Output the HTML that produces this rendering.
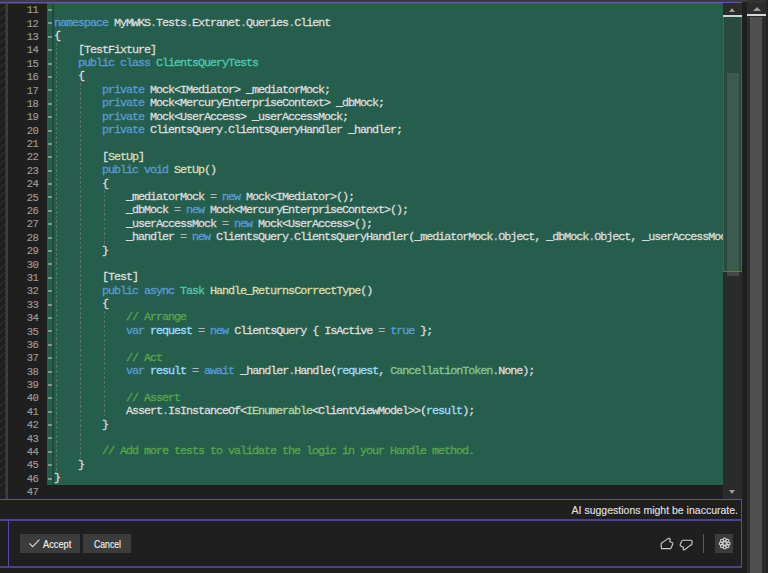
<!DOCTYPE html>
<html><head><meta charset="utf-8"><style>
html,body{margin:0;padding:0;}
body{width:768px;height:573px;overflow:hidden;background:#1f1f1f;position:relative;font-family:"Liberation Mono",monospace;}
.abs{position:absolute;}
#topbar{position:absolute;left:0;top:0;width:748px;height:2px;background:#3c3c3c;}
#topbar2{position:absolute;left:748px;top:0;width:20px;height:3px;background:#333;}
#purple{position:absolute;left:0;top:2px;width:742px;height:1px;background:#6655b0;}
#purple2{position:absolute;left:0;top:3px;width:742px;height:1px;background:rgba(102,85,176,0.45);}
#hatch{position:absolute;left:0;top:4px;width:6px;height:495px;
 background:repeating-linear-gradient(135deg,#1f1f1f 0px,#1f1f1f 4.5px,#2d2d2d 4.5px,#2d2d2d 5.7px);}
#gbar{position:absolute;left:5px;top:4px;width:3px;height:495px;background:linear-gradient(90deg,#303031 0,#303031 1px,#3e3e40 1px);}
#green{position:absolute;left:47px;top:3px;width:677px;height:482px;background:#265e4d;}
#gstripe{position:absolute;left:52px;top:3px;width:2px;height:482px;background:#204a3c;}
.fd{position:absolute;left:48px;width:4px;height:2px;background:#7c9b8d;}
.ig{position:absolute;width:1px;background:repeating-linear-gradient(180deg,#587468 0px,#587468 2.7px,transparent 2.7px,transparent 4.67px);}
.nm{position:absolute;left:0;width:38.4px;margin-top:1.2px;text-align:right;height:13.39px;line-height:13.39px;font-size:11.75px;letter-spacing:-0.6px;transform:scaleX(0.9);transform-origin:right center;color:#9d9d9d;white-space:pre;-webkit-text-stroke:0.15px currentColor;}
.ln{position:absolute;left:54px;margin-top:0.5px;-webkit-text-stroke:0.3px currentColor;height:13.39px;line-height:13.39px;font-size:11.75px;letter-spacing:-1.05px;color:#dcdcdc;white-space:pre;}
#code{position:absolute;left:0;top:0;width:723px;height:499px;overflow:hidden;}
.k{color:#569cd6}.t{color:#4ec9b0}.s{color:#86c691}.i{color:#b8d7a3}.m{color:#dcdcaa}.p{color:#9cdcfe}.c{color:#57a64a}.o{color:#b4b4b4}
/* editor scrollbar */
#vs{position:absolute;left:723px;top:3px;width:19px;height:496px;background:#2b2b2b;}
#vsTrack{position:absolute;left:723px;top:17px;width:17px;height:254px;border-left:1px solid #4f5e3b;border-right:1px solid #4f5e3b;border-bottom:1px solid #66784a;background:transparent;}
#vsTrackBg{position:absolute;left:724px;top:17px;width:17px;height:254px;background:#2b4a3f;}
#vsThumbX{position:absolute;left:727px;top:272px;width:11.5px;height:4px;background:#474747;}
#vsThumb{position:absolute;left:727px;top:73px;width:11.5px;height:198px;background:#3d5a51;}
#vsMark{position:absolute;left:723px;top:15px;width:19px;height:2px;background:#d2d4c8;}
.tri-up{position:absolute;width:0;height:0;border-left:3.5px solid transparent;border-right:3.5px solid transparent;border-bottom:4.5px solid #9a9a9a;}
.tri-dn{position:absolute;width:0;height:0;border-left:3.5px solid transparent;border-right:3.5px solid transparent;border-top:4.5px solid #9a9a9a;}
/* outer scrollbar */
#os{position:absolute;left:747px;top:3px;width:19px;height:570px;background:#2c2c2c;}
#osEdge{position:absolute;left:766px;top:0;width:2px;height:573px;background:#252525;}
#osThumb{position:absolute;left:750px;top:16.6px;width:12.2px;height:556px;background:#4f4f4f;}
#osMark{position:absolute;left:747px;top:14px;width:19px;height:2px;background:#d6d6d6;}
/* bottom panel */
.pl{position:absolute;background:#6655b8;}
#aitext{position:absolute;left:538px;top:500px;width:200px;height:20px;line-height:20px;text-align:right;font-family:"Liberation Sans",sans-serif;font-size:11.3px;transform:scaleX(0.93);transform-origin:right center;color:#dedede;white-space:nowrap;-webkit-text-stroke:0.2px currentColor;}
.btn{position:absolute;top:534px;height:19px;background:#3c3c3c;font-family:"Liberation Sans",sans-serif;font-size:11px;color:#f0f0f0;line-height:19px;}
#gearbox{position:absolute;left:715px;top:534px;width:18px;height:19px;background:#3c3c3c;}
#sep{position:absolute;left:703px;top:534px;width:1px;height:19px;background:#5a5a5a;}

.bt{position:absolute;top:1px;font-size:11px;-webkit-text-stroke:0.15px currentColor;transform:scaleX(0.84);transform-origin:left center;white-space:nowrap;}

</style></head><body>
<div id="topbar"></div><div id="topbar2"></div>
<div id="hatch"></div><div id="gbar"></div>
<div id="green"></div>
<div id="gstripe"></div>
<div class="fd" style="top:9.00px"></div>
<div class="fd" style="top:22.39px"></div>
<div class="fd" style="top:35.78px"></div>
<div class="fd" style="top:49.17px"></div>
<div class="fd" style="top:62.56px"></div>
<div class="fd" style="top:75.95px"></div>
<div class="fd" style="top:89.34px"></div>
<div class="fd" style="top:102.73px"></div>
<div class="fd" style="top:116.12px"></div>
<div class="fd" style="top:129.51px"></div>
<div class="fd" style="top:142.90px"></div>
<div class="fd" style="top:156.29px"></div>
<div class="fd" style="top:169.68px"></div>
<div class="fd" style="top:183.07px"></div>
<div class="fd" style="top:196.46px"></div>
<div class="fd" style="top:209.85px"></div>
<div class="fd" style="top:223.24px"></div>
<div class="fd" style="top:236.63px"></div>
<div class="fd" style="top:250.02px"></div>
<div class="fd" style="top:263.41px"></div>
<div class="fd" style="top:276.80px"></div>
<div class="fd" style="top:290.19px"></div>
<div class="fd" style="top:303.58px"></div>
<div class="fd" style="top:316.97px"></div>
<div class="fd" style="top:330.36px"></div>
<div class="fd" style="top:343.75px"></div>
<div class="fd" style="top:357.14px"></div>
<div class="fd" style="top:370.53px"></div>
<div class="fd" style="top:383.92px"></div>
<div class="fd" style="top:397.31px"></div>
<div class="fd" style="top:410.70px"></div>
<div class="fd" style="top:424.09px"></div>
<div class="fd" style="top:437.48px"></div>
<div class="fd" style="top:450.87px"></div>
<div class="fd" style="top:464.26px"></div>
<div class="fd" style="top:477.65px"></div>
<div class="ig" style="left:56px;top:43.17px;height:428.48px"></div>
<div class="ig" style="left:80px;top:83.34px;height:374.92px"></div>
<div class="ig" style="left:104px;top:190.46px;height:53.56px"></div>
<div class="ig" style="left:104px;top:310.97px;height:107.12px"></div>
<div id="code">
<div class="nm" style="top:3.00px">11</div>
<div class="nm" style="top:16.39px">12</div>
<div class="nm" style="top:29.78px">13</div>
<div class="nm" style="top:43.17px">14</div>
<div class="nm" style="top:56.56px">15</div>
<div class="nm" style="top:69.95px">16</div>
<div class="nm" style="top:83.34px">17</div>
<div class="nm" style="top:96.73px">18</div>
<div class="nm" style="top:110.12px">19</div>
<div class="nm" style="top:123.51px">20</div>
<div class="nm" style="top:136.90px">21</div>
<div class="nm" style="top:150.29px">22</div>
<div class="nm" style="top:163.68px">23</div>
<div class="nm" style="top:177.07px">24</div>
<div class="nm" style="top:190.46px">25</div>
<div class="nm" style="top:203.85px">26</div>
<div class="nm" style="top:217.24px">27</div>
<div class="nm" style="top:230.63px">28</div>
<div class="nm" style="top:244.02px">29</div>
<div class="nm" style="top:257.41px">30</div>
<div class="nm" style="top:270.80px">31</div>
<div class="nm" style="top:284.19px">32</div>
<div class="nm" style="top:297.58px">33</div>
<div class="nm" style="top:310.97px">34</div>
<div class="nm" style="top:324.36px">35</div>
<div class="nm" style="top:337.75px">36</div>
<div class="nm" style="top:351.14px">37</div>
<div class="nm" style="top:364.53px">38</div>
<div class="nm" style="top:377.92px">39</div>
<div class="nm" style="top:391.31px">40</div>
<div class="nm" style="top:404.70px">41</div>
<div class="nm" style="top:418.09px">42</div>
<div class="nm" style="top:431.48px">43</div>
<div class="nm" style="top:444.87px">44</div>
<div class="nm" style="top:458.26px">45</div>
<div class="nm" style="top:471.65px">46</div>
<div class="nm" style="top:485.04px">47</div>
<div class="ln" style="top:3.00px"></div>
<div class="ln" style="top:16.39px"><span class="k">namespace</span> MyMWKS<span class="o">.</span>Tests<span class="o">.</span>Extranet<span class="o">.</span>Queries<span class="o">.</span>Client</div>
<div class="ln" style="top:29.78px">{</div>
<div class="ln" style="top:43.17px">    [TestFixture]</div>
<div class="ln" style="top:56.56px">    <span class="k">public</span> <span class="k">class</span> <span class="t">ClientsQueryTests</span></div>
<div class="ln" style="top:69.95px">    {</div>
<div class="ln" style="top:83.34px">        <span class="k">private</span> Mock&lt;IMediator&gt; _mediatorMock;</div>
<div class="ln" style="top:96.73px">        <span class="k">private</span> Mock&lt;MercuryEnterpriseContext&gt; _dbMock;</div>
<div class="ln" style="top:110.12px">        <span class="k">private</span> Mock&lt;UserAccess&gt; _userAccessMock;</div>
<div class="ln" style="top:123.51px">        <span class="k">private</span> ClientsQuery<span class="o">.</span>ClientsQueryHandler _handler;</div>
<div class="ln" style="top:136.90px"></div>
<div class="ln" style="top:150.29px">        [<span class="m">SetUp</span>]</div>
<div class="ln" style="top:163.68px">        <span class="k">public</span> <span class="k">void</span> <span class="m">SetUp</span>()</div>
<div class="ln" style="top:177.07px">        {</div>
<div class="ln" style="top:190.46px">            _mediatorMock <span class="o">=</span> <span class="k">new</span> Mock&lt;IMediator&gt;();</div>
<div class="ln" style="top:203.85px">            _dbMock <span class="o">=</span> <span class="k">new</span> Mock&lt;MercuryEnterpriseContext&gt;();</div>
<div class="ln" style="top:217.24px">            _userAccessMock <span class="o">=</span> <span class="k">new</span> Mock&lt;UserAccess&gt;();</div>
<div class="ln" style="top:230.63px">            _handler <span class="o">=</span> <span class="k">new</span> ClientsQuery<span class="o">.</span>ClientsQueryHandler(_mediatorMock<span class="o">.</span>Object, _dbMock<span class="o">.</span>Object, _userAccessMock<span class="o">.</span>Object);</div>
<div class="ln" style="top:244.02px">        }</div>
<div class="ln" style="top:257.41px"></div>
<div class="ln" style="top:270.80px">        [Test]</div>
<div class="ln" style="top:284.19px">        <span class="k">public</span> <span class="k">async</span> <span class="t">Task</span> <span class="m">Handle_ReturnsCorrectType</span>()</div>
<div class="ln" style="top:297.58px">        {</div>
<div class="ln" style="top:310.97px">            <span class="c">// Arrange</span></div>
<div class="ln" style="top:324.36px">            <span class="k">var</span> <span class="p">request</span> <span class="o">=</span> <span class="k">new</span> ClientsQuery { IsActive <span class="o">=</span> <span class="k">true</span> };</div>
<div class="ln" style="top:337.75px"></div>
<div class="ln" style="top:351.14px">            <span class="c">// Act</span></div>
<div class="ln" style="top:364.53px">            <span class="k">var</span> <span class="p">result</span> <span class="o">=</span> <span class="k">await</span> _handler<span class="o">.</span>Handle(<span class="p">request</span>, <span class="s">CancellationToken</span><span class="o">.</span>None);</div>
<div class="ln" style="top:377.92px"></div>
<div class="ln" style="top:391.31px">            <span class="c">// Assert</span></div>
<div class="ln" style="top:404.70px">            Assert<span class="o">.</span>IsInstanceOf&lt;<span class="i">IEnumerable</span>&lt;ClientViewModel&gt;&gt;(<span class="p">result</span>);</div>
<div class="ln" style="top:418.09px">        }</div>
<div class="ln" style="top:431.48px"></div>
<div class="ln" style="top:444.87px">        <span class="c">// Add more tests to validate the logic in your Handle method.</span></div>
<div class="ln" style="top:458.26px">    }</div>
<div class="ln" style="top:471.65px">}</div>
<div class="ln" style="top:485.04px"></div>
</div>
<div id="purple"></div><div id="purple2"></div>
<div id="vs"></div>
<div id="vsTrackBg"></div>
<div id="vsThumb"></div>
<div id="vsThumbX"></div>
<div id="vsTrack"></div>
<div id="vsMark"></div>
<div class="tri-up" style="left:729px;top:8px"></div>
<div class="tri-dn" style="left:729px;top:490px"></div>
<div id="os"></div>
<div id="osEdge"></div>
<div id="osThumb"></div>
<div id="osMark"></div>
<div class="tri-up" style="left:752.5px;top:6.8px;border-left-width:4px;border-right-width:4px;border-bottom-width:4.3px"></div>
<!-- bottom panel lines -->
<div class="pl" style="left:0;top:499px;width:742px;height:1px;background:#5f4fb0"></div>
<div class="pl" style="left:0;top:519px;width:742px;height:2px;background:#4d4192"></div>
<div class="pl" style="left:741px;top:499px;width:1px;height:68px;background:#5848a8"></div>
<div class="pl" style="left:8px;top:520px;width:1px;height:47px;background:#5848a8"></div>
<div class="pl" style="left:0;top:566px;width:742px;height:2px;background:#4d4192"></div>
<div id="aitext">AI suggestions might be inaccurate.</div>
<div class="btn" style="left:20px;width:60px;">
 <svg style="position:absolute;left:9px;top:5px" width="11" height="9" viewBox="0 0 11 9"><path d="M0.4 4.4 L3.6 7.6 L10.5 0.7" fill="none" stroke="#d6d6d6" stroke-width="1.2"/></svg>
 <span class="bt" style="left:23px;">Accept</span>
</div>
<div class="btn" style="left:83px;width:48px;"><span class="bt" style="left:11px;transform:scaleX(0.79)">Cancel</span></div>
<svg style="position:absolute;left:656px;top:533px" width="42" height="22" viewBox="0 0 42 22">
 <g fill="none" stroke="#cbcbcb" stroke-width="1.15" stroke-linejoin="round" stroke-linecap="round">
 <path d="M5.5 15.6 L5.1 11.2 Q5.1 9.9 6.6 9.4 L12.1 5.6 Q13.6 4.7 14.2 6.4 L13.8 8.7 L16.2 9.5 Q17.1 9.9 16.8 10.9 L14.8 15.6 Z"/>
 <path d="M26.6 7.3 L35 7.2 Q36.1 7.3 36.1 8.4 L35.8 11.8 L33.9 12.6 L28.5 16.8 Q27.3 17.1 27.1 16.1 L27.4 14.2 L24.7 12.9 Q23.9 12.4 24.2 11.6 L25.7 8.3 Q26 7.4 26.6 7.3 Z"/>
 </g>
</svg>
<div id="sep"></div>
<div id="gearbox">
 <svg style="position:absolute;left:0;top:0" width="18" height="19" viewBox="714.5 534 18 19">
  <g fill="none" stroke="#d2d2d2" stroke-width="1.05"><circle cx="724.20" cy="539.65" r="1.6"/><circle cx="726.92" cy="540.78" r="1.6"/><circle cx="728.05" cy="543.50" r="1.6"/><circle cx="726.92" cy="546.22" r="1.6"/><circle cx="724.20" cy="547.35" r="1.6"/><circle cx="721.48" cy="546.22" r="1.6"/><circle cx="720.35" cy="543.50" r="1.6"/><circle cx="721.48" cy="540.78" r="1.6"/><circle cx="724.2" cy="543.5" r="1.7"/></g>
 </svg>
</div>

</body></html>
